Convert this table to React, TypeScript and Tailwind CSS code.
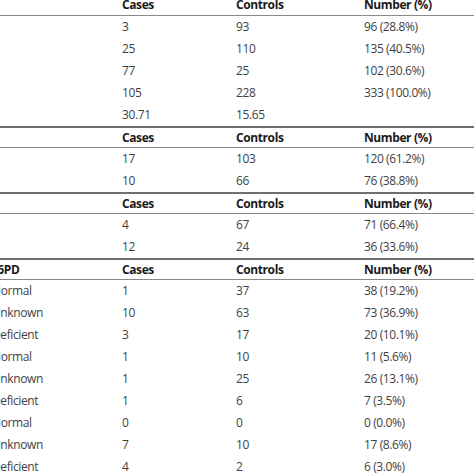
import * as React from "react";

type Row = {
  label?: string;
  cases: string;
  controls: string;
  number: string;
  header?: boolean;
  thick?: boolean;
};

const header = (label = "", thick = true): Row => ({
  label,
  cases: "Cases",
  controls: "Controls",
  number: "Number (%)",
  header: true,
  thick,
});

const rows: Row[] = [
  header("", false),
  { cases: "3", controls: "93", number: "96 (28.8%)" },
  { cases: "25", controls: "110", number: "135 (40.5%)" },
  { cases: "77", controls: "25", number: "102 (30.6%)" },
  { cases: "105", controls: "228", number: "333 (100.0%)" },
  { cases: "30.71", controls: "15.65", number: "" },
  header(),
  { cases: "17", controls: "103", number: "120 (61.2%)" },
  { cases: "10", controls: "66", number: "76 (38.8%)" },
  header(),
  { cases: "4", controls: "67", number: "71 (66.4%)" },
  { cases: "12", controls: "24", number: "36 (33.6%)" },
  header("G6PD"),
  { label: "Normal", cases: "1", controls: "37", number: "38 (19.2%)" },
  { label: "Unknown", cases: "10", controls: "63", number: "73 (36.9%)" },
  { label: "Deficient", cases: "3", controls: "17", number: "20 (10.1%)" },
  { label: "Normal", cases: "1", controls: "10", number: "11 (5.6%)" },
  { label: "Unknown", cases: "1", controls: "25", number: "26 (13.1%)" },
  { label: "Deficient", cases: "1", controls: "6", number: "7 (3.5%)" },
  { label: "Normal", cases: "0", controls: "0", number: "0 (0.0%)" },
  { label: "Unknown", cases: "7", controls: "10", number: "17 (8.6%)" },
  { label: "Deficient", cases: "4", controls: "2", number: "6 (3.0%)" },
];

export default function App() {
  return (
    <div
      className="w-[474px] h-[474px] overflow-hidden bg-white text-[12px] tracking-[-0.4px]"
      style={{ fontFamily: '"Open Sans", "Liberation Sans", sans-serif' }}
    >
      <div className="-mt-[6px] flex flex-col">
        {rows.map((r, i) => (
          <div
            key={i}
            className={
              r.header
                ? `flex items-center h-[22px] font-bold text-[#1a1a1a] border-b border-[#8a8a8a] ${
                    r.thick ? "border-t-2 border-t-[#6f6f6f]" : ""
                  }`
                : "flex items-center h-[22px] text-[#3f3f3f]"
            }
          >
            <div className="w-[122px] overflow-hidden whitespace-nowrap">
              <span className={r.header ? "-ml-[11px] block" : "-ml-[8px] block"}>
                {r.label}
              </span>
            </div>
            <div className="w-[114px]">{r.cases}</div>
            <div className="w-[128px]">{r.controls}</div>
            <div className="flex-1">{r.number}</div>
          </div>
        ))}
      </div>
    </div>
  );
}
